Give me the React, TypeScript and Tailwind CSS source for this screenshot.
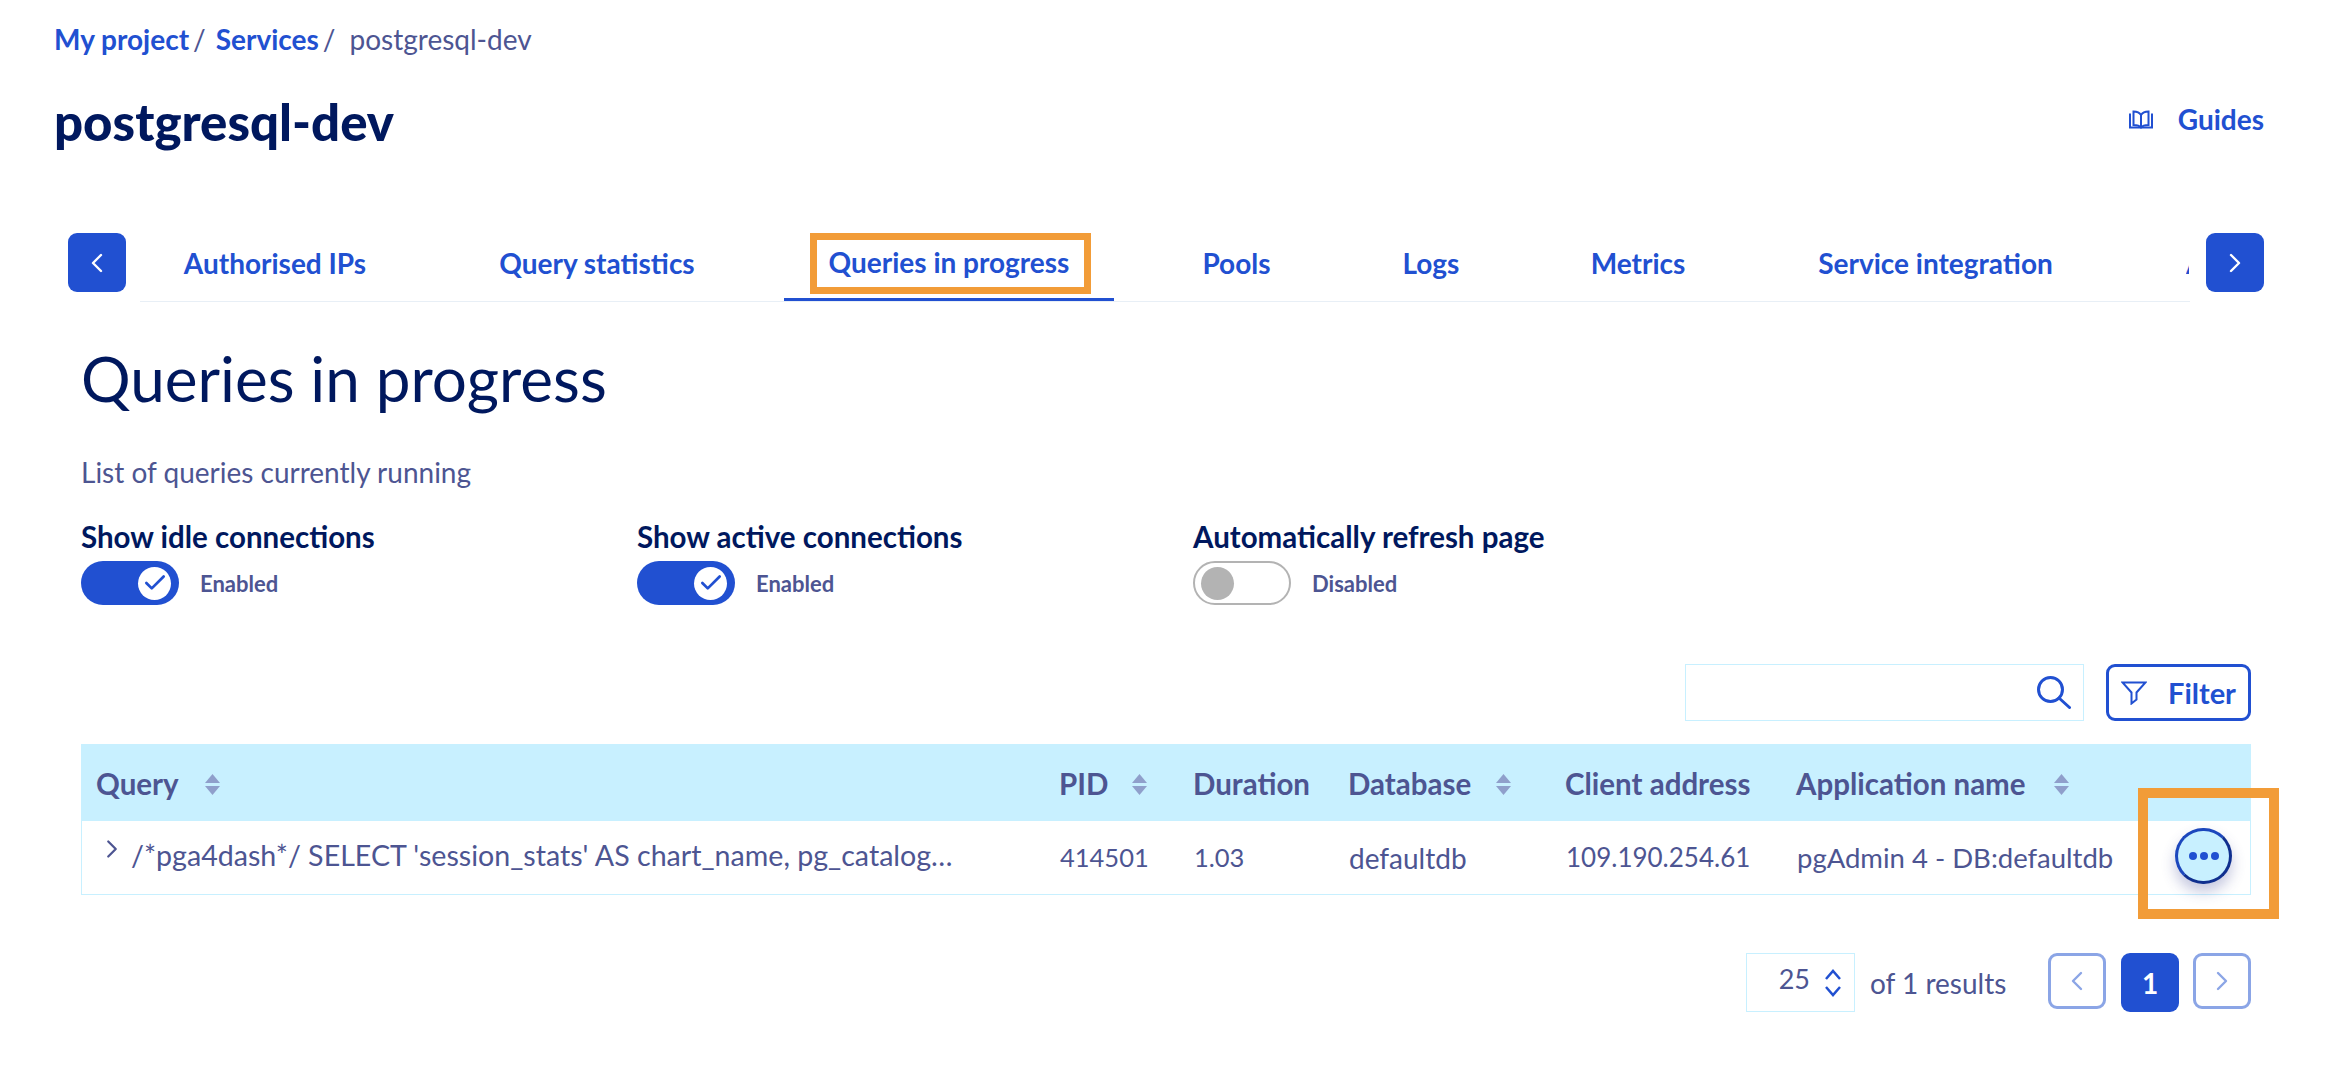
import { Check, ChevronLeft, ChevronRight } from "lucide-react";

const font = "font-['Lato',sans-serif]";

const tabs = [
  { label: "Authorised IPs", w: "w-[270px]" },
  { label: "Query statistics", w: "w-[284px]" },
  { label: "Queries in progress", w: "w-[330px]", active: true },
  { label: "Pools", w: "w-[155px]" },
  { label: "Logs", w: "w-[144px]" },
  { label: "Metrics", w: "w-[180px]" },
  { label: "Service integration", w: "w-[325px]" },
];

const SortIcon = () => (
  <svg width="15" height="21" viewBox="0 0 15 21" className="shrink-0">
    <path d="M7.5 0 15 9H0Z" fill="#8f9fcb" />
    <path d="M7.5 21 0 12H15Z" fill="#8f9fcb" />
  </svg>
);

const Toggle = ({ title, on }: { title: string; on: boolean }) => (
  <div className="w-[556px]">
    <div className="h-[30px] text-[29.5px] leading-[30px] font-bold whitespace-nowrap text-[#00185e]">{title}</div>
    <div className="mt-[9px] flex items-center gap-[21px]">
      {on ? (
        <div className="flex h-[44px] w-[98px] items-center justify-end rounded-full bg-[#2150d1] pr-[8px]">
          <div className="flex h-[33px] w-[33px] items-center justify-center rounded-full bg-white">
            <Check size={26} strokeWidth={2.5} className="text-[#2150d1]" />
          </div>
        </div>
      ) : (
        <div className="flex h-[44px] w-[98px] items-center rounded-full border-2 border-[#b3b3b3] bg-white pl-[6px]">
          <div className="h-[33px] w-[33px] rounded-full bg-[#b3b3b3]" />
        </div>
      )}
      <span className="text-[22px] font-bold text-[#4d5592]">{on ? "Enabled" : "Disabled"}</span>
    </div>
  </div>
);

const HeadCell = ({ label, sort, gap }: { label: string; sort?: boolean; gap?: string }) => (
  <div className={`flex items-center pt-[3px] ${gap ?? ""}`}>
    <span className="text-[29.5px] font-bold whitespace-nowrap text-[#4d5592]">{label}</span>
    {sort && <SortIcon />}
  </div>
);

const columns = "grid grid-cols-[978px_134px_155px_217px_231px_455px] items-center";

export default function App() {
  return (
    <div className={`${font} min-h-[1092px] bg-white pt-[24px]`}>
      {/* Breadcrumb */}
      <div className="flex h-[30px] items-center pl-[54px] text-[28px] leading-[30px] whitespace-nowrap">
        <a className="font-bold text-[#2150d1]">My project</a>
        <span className="ml-[4px] text-[#4d5592]">/</span>
        <a className="ml-[10px] font-bold text-[#2150d1]">Services</a>
        <span className="ml-[4px] text-[#4d5592]">/</span>
        <span className="ml-[14px] text-[#4d5592]">postgresql-dev</span>
      </div>

      {/* Title */}
      <div className="mt-[38px] flex h-[60px] items-center justify-between pr-[70px] pl-[54px]">
        <h1 className="text-[51px] font-black text-[#00185e]">postgresql-dev</h1>
        <a className="mb-[6px] flex items-center gap-[25px] text-[28px] font-bold text-[#2150d1]">
          <svg width="24" height="19" viewBox="0 0 24 19" fill="none" stroke="#2150d1" strokeWidth="2">
            <path d="M1 3.500V17.500H23V3.500" />
            <path d="M4.500 15V1.500C7.500 1.500 10.500 2.500 12 5C13.500 2.500 16.500 1.500 19.500 1.500V15C16.500 15 13.500 15.500 12 17.500C10.500 15.500 7.500 15 4.500 15Z" />
            <path d="M12 5V17" />
          </svg>
          Guides
        </a>
      </div>

      {/* Tabs */}
      <div className="mt-[81px] flex h-[69px] items-start pr-[70px] pl-[68px]">
        <button className="flex h-[59px] w-[58px] shrink-0 items-center justify-center rounded-[9px] bg-[#2150d1]">
          <ChevronLeft size={32} strokeWidth={1.8} className="text-white" />
        </button>
        <div className="ml-[14px] flex h-[69px] min-w-0 flex-1 gap-[45px] overflow-hidden border-b border-[#e8eff6]">
          {tabs.map((tab) => (
            <div
              key={tab.label}
              className={`relative flex h-[68px] shrink-0 items-center justify-center pb-[8px] text-[28px] font-bold whitespace-nowrap text-[#2150d1] ${tab.w} ${tab.active ? "border-b-[3px] border-[#2150d1]" : ""}`}
            >
              {tab.label}
              {tab.active && (
                <div className="absolute top-0 left-[26px] h-[61px] w-[281px] border-[7px] border-[#f29c38]" />
              )}
            </div>
          ))}
          <div className="flex h-[68px] w-[46px] shrink-0 items-center justify-end overflow-hidden pb-[8px] text-[28px] font-bold whitespace-nowrap text-[#2150d1]">
            <span className="w-[3px] overflow-hidden">A</span>
          </div>
        </div>
        <button className="ml-[16px] flex h-[59px] w-[58px] shrink-0 items-center justify-center rounded-[9px] bg-[#2150d1]">
          <ChevronRight size={32} strokeWidth={1.8} className="text-white" />
        </button>
      </div>

      {/* Section */}
      <div className="pr-[83px] pl-[81px]">
        <h2 className="mt-[38px] h-[76px] text-[62px] leading-[76px] font-normal text-[#00185e]">Queries in progress</h2>
        <p className="mt-[38px] h-[36px] text-[28px] leading-[36px] text-[#4d5592]">List of queries currently running</p>

        <div className="mt-[32px] flex">
          <Toggle title="Show idle connections" on />
          <Toggle title="Show active connections" on />
          <Toggle title="Automatically refresh page" on={false} />
        </div>

        {/* Search + filter */}
        <div className="mt-[59px] flex justify-end gap-[22px]">
          <div className="flex h-[57px] w-[399px] items-center justify-end border border-[#c8f0ff] pr-[12px]">
            <svg width="34" height="33" viewBox="0 0 34 33" fill="none" stroke="#2150d1" strokeWidth="3" strokeLinecap="round">
              <circle cx="13.500" cy="13.500" r="12" />
              <path d="M22 22 32.500 31.500" />
            </svg>
          </div>
          <button className="flex h-[57px] w-[145px] items-center gap-[21px] rounded-[9px] border-[3px] border-[#2150d1] pl-[12px] text-[29px] font-bold text-[#2150d1]">
            <svg width="26" height="24" viewBox="0 0 26 24" fill="none" stroke="#2150d1" strokeWidth="2">
              <path d="M1.500 1.500H24.500L15.500 11.500V18.500L10.500 22.500V11.500Z" />
            </svg>
            Filter
          </button>
        </div>

        {/* Table */}
        <div className="mt-[23px]">
          <div className={`${columns} h-[77px] bg-[#c8f0ff]`}>
            <div className="pl-[15px]">
              <HeadCell label="Query" sort gap="gap-[26px]" />
            </div>
            <HeadCell label="PID" sort gap="gap-[24px]" />
            <HeadCell label="Duration" />
            <HeadCell label="Database" sort gap="gap-[25px]" />
            <HeadCell label="Client address" />
            <HeadCell label="Application name" sort gap="gap-[28px]" />
          </div>
          <div className={`${columns} h-[74px] border-x border-b border-[#c8f0ff] text-[28px] whitespace-nowrap text-[#4d5592]`}>
            <div className="flex items-center pl-[15px]">
              <ChevronRight size={30} strokeWidth={1.8} className="mb-[16px] shrink-0 text-[#4d5592]" />
              <span className="ml-[4px] pb-[4px] text-[28.6px]">/*pga4dash*/ SELECT 'session_stats' AS chart_name, pg_catalog…</span>
            </div>
            <div className="text-[25.5px]">414501</div>
            <div className="text-[25.5px]">1.03</div>
            <div>defaultdb</div>
            <div className="text-[26px]">109.190.254.61</div>
            <div className="relative text-[27.5px]">
              pgAdmin 4 - DB:defaultdb
              <button className="absolute top-[-9px] left-[378px] flex h-[56px] w-[57px] items-center justify-center gap-[3px] rounded-full border-[3px] border-[#1c47bd] border-r-[#0f2f8f] border-b-[#0f2f8f] bg-[#c8f0ff] shadow-[0_8px_14px_rgba(60,70,150,0.3)]">
                <span className="h-[8px] w-[8px] rounded-full bg-[#2150d1]" />
                <span className="h-[8px] w-[8px] rounded-full bg-[#2150d1]" />
                <span className="h-[8px] w-[8px] rounded-full bg-[#2150d1]" />
              </button>
              <div className="absolute top-[-49px] left-[341px] h-[131px] w-[141px] border-[10px] border-[#f29c38]" />
            </div>
          </div>
        </div>

        {/* Pagination */}
        <div className="mt-[58px] flex items-start justify-end">
          <div className="flex h-[59px] w-[109px] items-center justify-end border border-[#c8f0ff] pr-[12px] pb-[6px] text-[27px] text-[#4d5592]">
            25
            <svg width="18" height="30" viewBox="0 0 18 30" fill="none" stroke="#2150d1" strokeWidth="2.500" className="mt-[6px] ml-[14px]">
              <path d="M2 11 9 3 16 11" />
              <path d="M2 19 9 27 16 19" />
            </svg>
          </div>
          <span className="ml-[15px] flex h-[59px] w-[178px] items-center text-[28px] text-[#4d5592]">of 1 results</span>
          <button className="flex h-[56px] w-[58px] items-center justify-center rounded-[9px] border-[3px] border-[#8ba5e6]">
            <ChevronLeft size={32} strokeWidth={1.8} className="text-[#8ba5e6]" />
          </button>
          <button className="ml-[15px] flex h-[59px] w-[58px] items-center justify-center rounded-[9px] bg-[#2150d1] text-[28px] font-bold text-white">
            1
          </button>
          <button className="ml-[14px] flex h-[56px] w-[58px] items-center justify-center rounded-[9px] border-[3px] border-[#8ba5e6]">
            <ChevronRight size={32} strokeWidth={1.8} className="text-[#8ba5e6]" />
          </button>
        </div>
      </div>
    </div>
  );
}
